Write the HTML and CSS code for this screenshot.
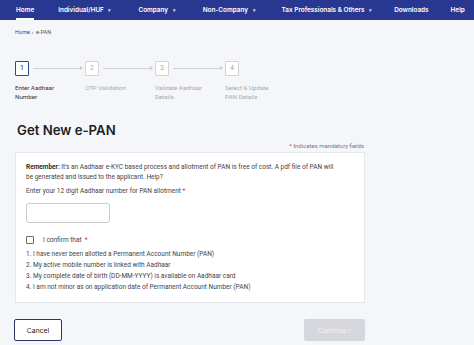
FILE: index.html
```html
<!DOCTYPE html>
<html lang="en">
<head>
    <meta charset="UTF-8">
    <title>Get New e-PAN</title>
    <link rel="stylesheet" href="styles.css">
</head>
<body>
    <nav class="topnav">
        <a class="nav-item active" style="margin-left:16px">Home</a>
        <a class="nav-item" style="margin-left:24px">Individual/HUF <span class="caret">&#9662;</span></a>
        <a class="nav-item" style="margin-left:27px">Company <span class="caret">&#9662;</span></a>
        <a class="nav-item" style="margin-left:27px">Non-Company <span class="caret">&#9662;</span></a>
        <a class="nav-item" style="margin-left:26px">Tax Professionals &amp; Others <span class="caret">&#9662;</span></a>
        <a class="nav-item" style="margin-left:22px">Downloads</a>
        <a class="nav-item" style="margin-left:22px">Help</a>
    </nav>

    <div class="page">
        <div class="breadcrumb"><span class="crumb-link">Home</span> &rsaquo; &nbsp;e-PAN</div>

        <div class="stepper">
            <div class="step current">
                <div class="step-head"><span class="step-box">1</span><span class="step-line"></span></div>
                <div class="step-label">Enter Aadhaar<br>Number</div>
            </div>
            <div class="step">
                <div class="step-head"><span class="step-box">2</span><span class="step-line"></span></div>
                <div class="step-label">OTP Validation</div>
            </div>
            <div class="step">
                <div class="step-head"><span class="step-box">3</span><span class="step-line"></span></div>
                <div class="step-label">Validate Aadhaar<br>Details</div>
            </div>
            <div class="step">
                <div class="step-head"><span class="step-box">4</span></div>
                <div class="step-label">Select &amp; Update<br>PAN Details</div>
            </div>
        </div>

        <h1 class="title">Get New e-PAN</h1>
        <div class="mandatory"><span class="req">*</span> Indicates mandatory fields</div>

        <div class="card">
            <p class="remember"><b>Remember:</b> It's an Aadhaar e-KYC based process and allotment of PAN is free of cost. A pdf file of PAN will be generated and issued to the applicant. Help?</p>
            <label class="field-label">Enter your 12 digit Aadhaar number for PAN allotment <span class="req">*</span></label>
            <input class="aadhaar-input" type="text">
            <div class="confirm-row">
                <span class="checkbox"></span>
                <span>I confirm that &nbsp;<span class="req">*</span></span>
            </div>
            <ol class="conditions">
                <li>1. I have never been allotted a Permanent Account Number (PAN)</li>
                <li>2. My active mobile number is linked with Aadhaar</li>
                <li>3. My complete date of birth (DD-MM-YYYY) is available on Aadhaar card</li>
                <li>4. I am not minor as on application date of Permanent Account Number (PAN)</li>
            </ol>
        </div>

        <div class="actions">
            <button class="btn-cancel">Cancel</button>
            <button class="btn-continue">Continue &rsaquo;</button>
        </div>
    </div>
</body>
</html>
```

FILE: styles.css
```css
body {
    margin: 0;
    font-family: 'Roboto', 'Liberation Sans', sans-serif;
    background-color: #f5f6fa;
    color: #333;
    width: 474px;
    height: 345px;
    overflow: hidden;
}

.topnav {
    height: 20px;
    background-color: #283891;
    display: flex;
    align-items: center;
}

.nav-item {
    font-family: 'Inter', 'Liberation Sans', sans-serif;
    color: #fff;
    font-size: 6.4px;
    font-weight: 600;
    position: relative;
    line-height: 20px;
    white-space: nowrap;
}

.nav-item.active::after {
    content: '';
    position: absolute;
    left: 0;
    right: 0;
    bottom: 0;
    height: 2px;
    background: #fff;
}

.caret {
    font-size: 4.5px;
    margin-left: 3px;
    color: #c8cde8;
}

.page {
    width: 350px;
    margin-left: 15px;
}

.breadcrumb {
    font-size: 5.6px;
    color: #555;
    margin-top: 9px;
    height: 8px;
}

.crumb-link {
    color: #2a4a8c;
}

.stepper {
    display: flex;
    margin-top: 23px;
}

.step {
    width: 70px;
}

.step-head {
    display: flex;
    align-items: center;
    height: 16px;
}

.step-box {
    width: 12px;
    height: 13px;
    border: 1px solid #d2d4da;
    border-radius: 1px;
    background: #fff;
    font-size: 7px;
    color: #aaa;
    display: flex;
    align-items: center;
    justify-content: center;
    box-sizing: content-box;
}

.current .step-box {
    border: 1.5px solid #2a4a8c;
    color: #222;
}

.step-line {
    flex: 1;
    height: 1px;
    background: #d0d2d8;
    margin: 0 3px 0 4px;
    position: relative;
}

.step-line::after {
    content: '';
    position: absolute;
    right: -1px;
    top: -2px;
    border-left: 3px solid #c8cad0;
    border-top: 2.5px solid transparent;
    border-bottom: 2.5px solid transparent;
}

.step-label {
    font-size: 6.2px;
    line-height: 9px;
    color: #a8a8ae;
    margin-top: 8px;
}

.current .step-label {
    color: #333;
}

.title {
    font-family: 'Inter', 'Liberation Sans', sans-serif;
    font-size: 13.2px;
    font-weight: 600;
    color: #1e1e1e;
    margin: 18px 0 0 2px;
    line-height: 20px;
}

.mandatory {
    font-size: 6px;
    color: #777;
    text-align: right;
    margin-top: 1px;
    padding-right: 1px;
    line-height: 9px;
}

.req {
    color: #d0302c;
}

.card {
    background: #fff;
    border: 1px solid #e6e7eb;
    margin-top: 2px;
    height: 151px;
    box-sizing: border-box;
    padding: 9px 10px 0 10px;
    font-size: 6.5px;
    color: #444;
}

.remember {
    margin: 0;
    line-height: 10px;
    max-width: 310px;
}

.remember b {
    color: #222;
    font-weight: 600;
}

.field-label {
    display: block;
    margin-top: 5px;
    line-height: 9px;
}

.aadhaar-input {
    display: block;
    width: 84px;
    height: 20px;
    box-sizing: border-box;
    border: 1px solid #c8c9cf;
    border-radius: 3px;
    margin-top: 7px;
}

.confirm-row {
    display: flex;
    align-items: center;
    margin-top: 13px;
    gap: 9px;
}

.checkbox {
    width: 8px;
    height: 8px;
    border: 1px solid #6a6a6a;
    border-radius: 1px;
    box-sizing: border-box;
}

.conditions {
    list-style: none;
    margin: 5px 0 0 0;
    padding: 0;
}

.conditions li {
    line-height: 11px;
}

.actions {
    display: flex;
    justify-content: space-between;
    margin-top: 16px;
    margin-left: -1px;
}

.btn-cancel {
    width: 48px;
    height: 22px;
    background: #fff;
    border: 1px solid #2a3562;
    border-radius: 2px;
    color: #222;
    font-family: 'Inter', 'Liberation Sans', sans-serif;
    font-size: 6.8px;
    padding: 0;
}

.btn-continue {
    width: 61px;
    height: 22px;
    background: #d6d7dc;
    border: none;
    border-radius: 2px;
    color: #f2f2f4;
    font-family: 'Inter', 'Liberation Sans', sans-serif;
    font-size: 6.8px;
    padding: 0;
}
```
